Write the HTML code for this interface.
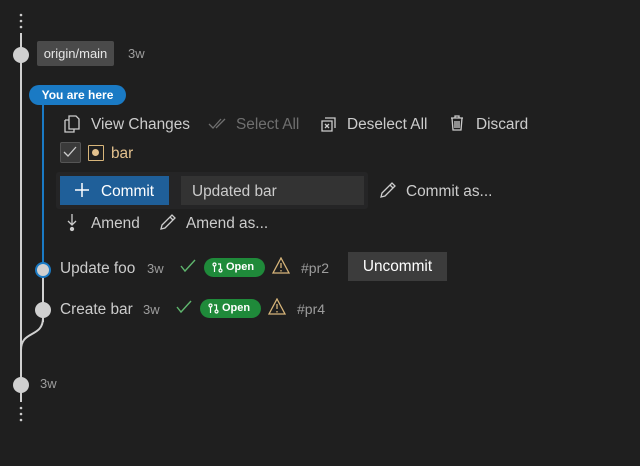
<!DOCTYPE html><html><head><style>
body{margin:0;width:640px;height:466px;background:#1f1f1f;font-family:"Liberation Sans",sans-serif;color:#cccccc;position:relative;overflow:hidden}
.a{position:absolute;white-space:nowrap}
.t{font-size:15.4px}
.g{color:#9d9d9d;font-size:13px}
.pill{position:absolute;background:#1f8a3a;color:#fff;font-size:11px;font-weight:bold;border-radius:10px;height:19px;line-height:19px;padding:0 11px 0 8px}
</style></head><body>
<svg class="a" style="left:0;top:0" width="640" height="466">
<g fill="#cccccc"><circle cx="21" cy="15" r="1.3"/><circle cx="21" cy="21" r="1.3"/><circle cx="21" cy="27" r="1.3"/>
<circle cx="21" cy="408" r="1.3"/><circle cx="21" cy="414" r="1.3"/><circle cx="21" cy="420" r="1.3"/></g>
<line x1="21" y1="33" x2="21" y2="402" stroke="#d0d0d0" stroke-width="2"/>
<line x1="43" y1="100" x2="43" y2="264" stroke="#1a7ac4" stroke-width="2"/>
<line x1="43" y1="274" x2="43" y2="322" stroke="#d0d0d0" stroke-width="2"/>
<path d="M43 318 C43 338 21 330 21 350" stroke="#d0d0d0" stroke-width="2" fill="none"/>
<circle cx="21" cy="55" r="8" fill="#d0d0d0"/>
<circle cx="43" cy="270" r="7" fill="#d0d0d0" stroke="#1a7ac4" stroke-width="2"/>
<circle cx="43" cy="310" r="8" fill="#d0d0d0"/>
<circle cx="21" cy="385" r="8" fill="#d0d0d0"/>
</svg>
<div class="a" style="left:37px;top:41px;width:77px;height:25px;background:#4a4a4a;border-radius:2px;color:#e6e6e6;font-size:13px;line-height:25px;text-align:center">origin/main</div>
<div class="a g" style="left:128px;top:46px">3w</div>
<div class="a" style="left:29px;top:85px;width:97px;height:20px;background:#1a7ac4;border-radius:10px;color:#fff;font-size:12px;font-weight:bold;line-height:20px;text-align:center">You are here</div>
<svg class="a" style="left:63px;top:114px" width="18" height="20" fill="none" stroke="#ccc" stroke-width="1.3"><path d="M6 2h7l3 3v10H6z M2 6h4 M2 6v12h9v-3"/></svg>
<div class="a t" style="left:91px;top:116px">View Changes</div>
<svg class="a" style="left:208px;top:117px" width="20" height="14" fill="none" stroke="#6f6f6f" stroke-width="1.3"><path d="M1 7l4 4 8-9 M8 11l9-9"/></svg>
<div class="a t" style="left:236px;top:116px;color:#6f6f6f">Select All</div>
<svg class="a" style="left:320px;top:115px" width="18" height="18" fill="none" stroke="#ccc" stroke-width="1.3"><path d="M5 3h10v10 M2 6h10v10H2z M5 9l4 4 M9 9l-4 4"/></svg>
<div class="a t" style="left:347px;top:116px">Deselect All</div>
<svg class="a" style="left:449px;top:114px" width="16" height="18" fill="none" stroke="#ccc" stroke-width="1.3"><path d="M2 4h12 M6 4V2h4v2 M3 4l1 12h8l1-12 M6 7v7 M8 7v7 M10 7v7"/></svg>
<div class="a t" style="left:476px;top:116px">Discard</div>
<div class="a" style="left:60px;top:142px;width:19px;height:19px;background:#3a3a3a;border:1px solid #555;border-radius:2px"></div>
<svg class="a" style="left:62px;top:145px" width="16" height="14" fill="none" stroke="#ccc" stroke-width="1.3"><path d="M2 7l4 4 8-9"/></svg>
<div class="a" style="left:88px;top:145px;width:14px;height:14px;border:1px solid #d7b57a;border-radius:1px"></div>
<div class="a" style="left:92px;top:149px;width:7px;height:7px;background:#e2c08d;border-radius:50%"></div>
<div class="a t" style="left:111px;top:145px;color:#e2c08d">bar</div>
<div class="a" style="left:56px;top:172px;width:312px;height:37px;background:#252526;border-radius:3px"></div>
<div class="a" style="left:60px;top:176px;width:109px;height:29px;background:#1f5f99"></div>
<svg class="a" style="left:74px;top:182px" width="16" height="16" stroke="#fff" stroke-width="1.5"><path d="M8 1v14 M1 8h14"/></svg>
<div class="a t" style="left:101px;top:183px;color:#fff">Commit</div>
<div class="a" style="left:181px;top:176px;width:183px;height:29px;background:#333333"></div>
<div class="a t" style="left:192px;top:183px;color:#cccccc">Updated bar</div>
<svg class="a" style="left:379px;top:181px" width="18" height="18" fill="none" stroke="#ccc" stroke-width="1.3"><path d="M2 16l1-4 10-10 3 3-10 10z M11 4l3 3"/></svg>
<div class="a t" style="left:406px;top:183px">Commit as...</div>
<svg class="a" style="left:66px;top:213px" width="12" height="20" fill="none" stroke="#ccc" stroke-width="1.3"><path d="M6 1v11 M2 8l4 4 4-4"/><circle cx="6" cy="16" r="1.5" fill="#ccc"/></svg>
<div class="a t" style="left:91px;top:215px">Amend</div>
<svg class="a" style="left:159px;top:213px" width="18" height="18" fill="none" stroke="#ccc" stroke-width="1.3"><path d="M2 16l1-4 10-10 3 3-10 10z M11 4l3 3"/></svg>
<div class="a t" style="left:186px;top:215px">Amend as...</div>
<div class="a t" style="left:60px;top:260px">Update foo</div>
<div class="a g" style="left:147px;top:261px">3w</div>
<svg class="a" style="left:180px;top:259px" width="16" height="14" fill="none" stroke="#5fb66e" stroke-width="1.4"><path d="M1 7l4 5 10-11"/></svg>
<div class="pill" style="left:204px;top:258px;padding-left:22px">Open</div>
<svg class="a" style="left:212px;top:262px" width="11" height="11" fill="none" stroke="#fff" stroke-width="1.2"><circle cx="2.5" cy="2.5" r="1.5"/><circle cx="8.5" cy="8.5" r="1.5"/><path d="M2.5 4v6 M8.5 7V2H6"/></svg>
<svg class="a" style="left:272px;top:257px" width="18" height="17" fill="none" stroke="#d7b57a" stroke-width="1.3"><path d="M9 1L17 16H1z M9 6v5 M9 13v1.5"/></svg>
<div class="a g" style="left:301px;top:260px;font-size:14px">#pr2</div>
<div class="a" style="left:348px;top:252px;width:99px;height:29px;background:#3c3c3c;color:#fff;font-size:15.4px;line-height:30px;text-align:center">Uncommit</div>
<div class="a t" style="left:60px;top:301px">Create bar</div>
<div class="a g" style="left:143px;top:302px">3w</div>
<svg class="a" style="left:176px;top:300px" width="16" height="14" fill="none" stroke="#5fb66e" stroke-width="1.4"><path d="M1 7l4 5 10-11"/></svg>
<div class="pill" style="left:200px;top:299px;padding-left:22px">Open</div>
<svg class="a" style="left:208px;top:303px" width="11" height="11" fill="none" stroke="#fff" stroke-width="1.2"><circle cx="2.5" cy="2.5" r="1.5"/><circle cx="8.5" cy="8.5" r="1.5"/><path d="M2.5 4v6 M8.5 7V2H6"/></svg>
<svg class="a" style="left:268px;top:298px" width="18" height="17" fill="none" stroke="#d7b57a" stroke-width="1.3"><path d="M9 1L17 16H1z M9 6v5 M9 13v1.5"/></svg>
<div class="a g" style="left:297px;top:301px;font-size:14px">#pr4</div>
<div class="a g" style="left:40px;top:376px">3w</div>
</body></html>
